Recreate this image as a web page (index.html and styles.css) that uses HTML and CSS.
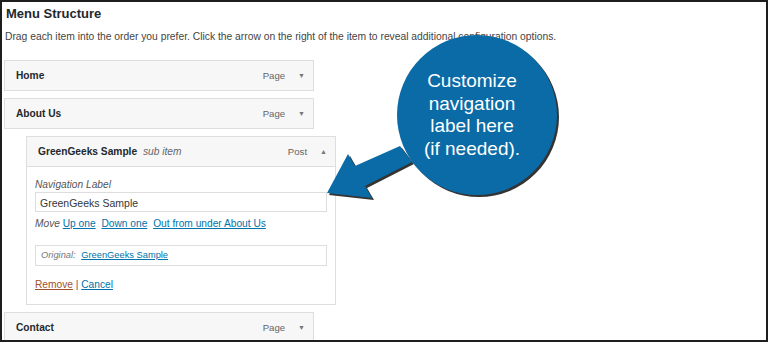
FILE: index.html
```html
<!DOCTYPE html>
<html lang="en">

<head>
    <title>Menu Structure</title>
    <meta name="viewport" content="width=device-width, initial-scale=1" />
    <link rel="stylesheet" href="styles.css">
</head>

<body>
    <div class="frame">
        <h2 class="title">Menu Structure</h2>
        <p class="intro">Drag each item into the order you prefer. Click the arrow on the right of the item to reveal additional configuration options.</p>

        <ul class="menu">
            <li class="item">
                <div class="bar">
                    <span class="name">Home</span>
                    <span class="type">Page</span>
                    <span class="toggle">&#9660;</span>
                </div>
            </li>
            <li class="item">
                <div class="bar">
                    <span class="name">About Us</span>
                    <span class="type">Page</span>
                    <span class="toggle">&#9660;</span>
                </div>
            </li>
            <li class="item sub open">
                <div class="bar">
                    <span class="name">GreenGeeks Sample <em>sub item</em></span>
                    <span class="type">Post</span>
                    <span class="toggle">&#9650;</span>
                </div>
                <div class="settings">
                    <label class="label">Navigation Label</label>
                    <div class="field">GreenGeeks Sample</div>
                    <p class="move"><em>Move</em> <a href="#">Up one</a> <a href="#">Down one</a> <a href="#">Out from under About Us</a></p>
                    <div class="original"><em>Original:</em> <a href="#">GreenGeeks Sample</a></div>
                    <p class="actions"><a href="#" class="remove">Remove</a> | <a href="#">Cancel</a></p>
                </div>
            </li>
            <li class="item">
                <div class="bar">
                    <span class="name">Contact</span>
                    <span class="type">Page</span>
                    <span class="toggle">&#9660;</span>
                </div>
            </li>
        </ul>

        <div class="callout">
            <svg width="768" height="342" viewBox="0 0 768 342">
                <g transform="translate(2 2)" fill="#111" opacity="0.85">
                    <circle cx="477" cy="115" r="80" />
                    <polygon points="400,146 355,166 348,154 327,193 372,198 365,186 412,162" />
                </g>
                <g fill="#0a6ba6">
                    <circle cx="477" cy="115" r="80" />
                    <polygon points="400,146 355,166 348,154 327,193 372,198 365,186 412,162" />
                </g>
            </svg>
            <div class="bubble-text">Customize<br>navigation<br>label here<br>(if needed).</div>
        </div>
    </div>
</body>

</html>
```

FILE: styles.css
```css
body {
    margin: 0;
    background: #fff;
    font-family: "Liberation Sans", Arial, sans-serif;
    color: #23282d;
}

.frame {
    position: relative;
    box-sizing: border-box;
    width: 768px;
    height: 342px;
    border: 2px solid #1e1e1e;
    padding: 0 2px;
    overflow: hidden;
}

.title {
    margin: 4px 0 0 2px;
    font-size: 13px;
    font-weight: bold;
}

.intro {
    margin: 10px 0 0 1px;
    font-size: 10.3px;
    color: #444;
}

.menu {
    list-style: none;
    margin: 18px 0 0;
    padding: 0;
}

.item {
    width: 310px;
    margin-bottom: 7px;
}

.bar {
    display: flex;
    align-items: center;
    box-sizing: border-box;
    height: 31px;
    padding: 0 8px 0 11px;
    background: #f7f7f7;
    border: 1px solid #dedede;
    font-size: 10.2px;
}

.name {
    flex: 1;
    font-weight: bold;
}

.name em {
    margin-left: 3px;
    font-weight: normal;
    color: #666;
}

.type {
    color: #666;
    font-size: 9.6px;
}

.toggle {
    margin-left: 13px;
    color: #777;
    font-size: 7px;
}

.sub {
    margin-left: 22px;
}

.sub .bar {
    padding-left: 11px;
}

.settings {
    box-sizing: border-box;
    height: 138px;
    padding: 12px 8px 0;
    border: 1px solid #dedede;
    border-top: none;
    background: #fff;
    font-size: 10.2px;
}

.label {
    display: block;
    font-style: italic;
    color: #555;
}

.field {
    box-sizing: border-box;
    height: 20px;
    margin-top: 2px;
    padding: 4px 4px;
    border: 1px solid #ddd;
    font-size: 10.5px;
    color: #32373c;
}

.move {
    margin: 6px 0 0;
    color: #555;
}

.move a {
    margin-right: 3px;
}

a {
    color: #0073aa;
}

.original {
    box-sizing: border-box;
    height: 21px;
    margin-top: 16px;
    padding: 4px 5px;
    border: 1px solid #ddd;
    font-size: 9.3px;
    color: #777;
}

.original a {
    margin-left: 3px;
}

.actions {
    margin: 13px 0 0;
    color: #555;
}

.remove {
    color: #a0522d;
}

.callout {
    position: absolute;
    left: -2px;
    top: -2px;
    width: 768px;
    height: 342px;
    pointer-events: none;
}

.callout svg {
    display: block;
}

.bubble-text {
    position: absolute;
    left: 397px;
    top: 70px;
    width: 150px;
    text-align: center;
    font-size: 19px;
    line-height: 22.5px;
    color: #fff;
}
```
